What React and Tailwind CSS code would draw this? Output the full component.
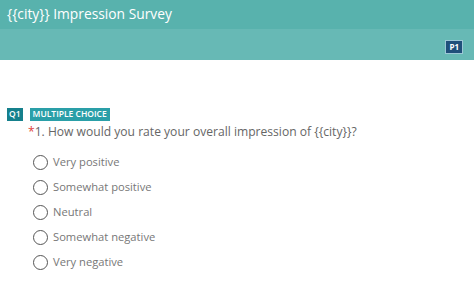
import React from 'react';

const options = ['Very positive', 'Somewhat positive', 'Neutral', 'Somewhat negative', 'Very negative'];

export default function App() {
  return (
    <div className="w-[474px] h-[294px] bg-white overflow-hidden" style={{ fontFamily: '"Open Sans", "Noto Sans", sans-serif' }}>
      {/* Header */}
      <div className="h-[29px] bg-[#58b2ad] flex items-center px-[7px]">
        <h1 className="text-white text-[13.8px] font-normal">{'{{city}}'} Impression Survey</h1>
      </div>
      <div className="h-[31px] bg-[#67b9b5] flex items-end justify-end pr-[11px] pb-[6px]">
        <span className="bg-[#1f4f7a] text-white text-[8px] font-bold leading-none px-[3px] py-[2px] border border-[#9cc7d6]">P1</span>
      </div>

      {/* Question */}
      <div className="pt-[48px] px-[7px]">
        <div className="flex items-center gap-[7px]">
          <span className="bg-[#15808c] text-white text-[8.5px] font-semibold leading-none px-[2px] py-[2px]">Q1</span>
          <span className="bg-[#2a9fa8] text-white text-[8.5px] font-semibold leading-none px-[3px] py-[2px]">MULTIPLE CHOICE</span>
        </div>
        <p className="mt-[1px] pl-[21px] text-[12.1px] leading-[20px] text-[#666]">
          <span className="text-[#e0443c]">*</span>1. How would you rate your overall impression of {'{{city}}'}?
        </p>
        <div className="mt-[8px] pl-[26px] flex flex-col">
          {options.map((o) => (
            <label key={o} className="h-[25px] flex items-center gap-[5px]">
              <span className="w-[15px] h-[15px] rounded-full border-[1.5px] border-[#555] bg-white" />
              <span className="text-[11.2px] text-[#777]">{o}</span>
            </label>
          ))}
        </div>
      </div>
    </div>
  );
}
